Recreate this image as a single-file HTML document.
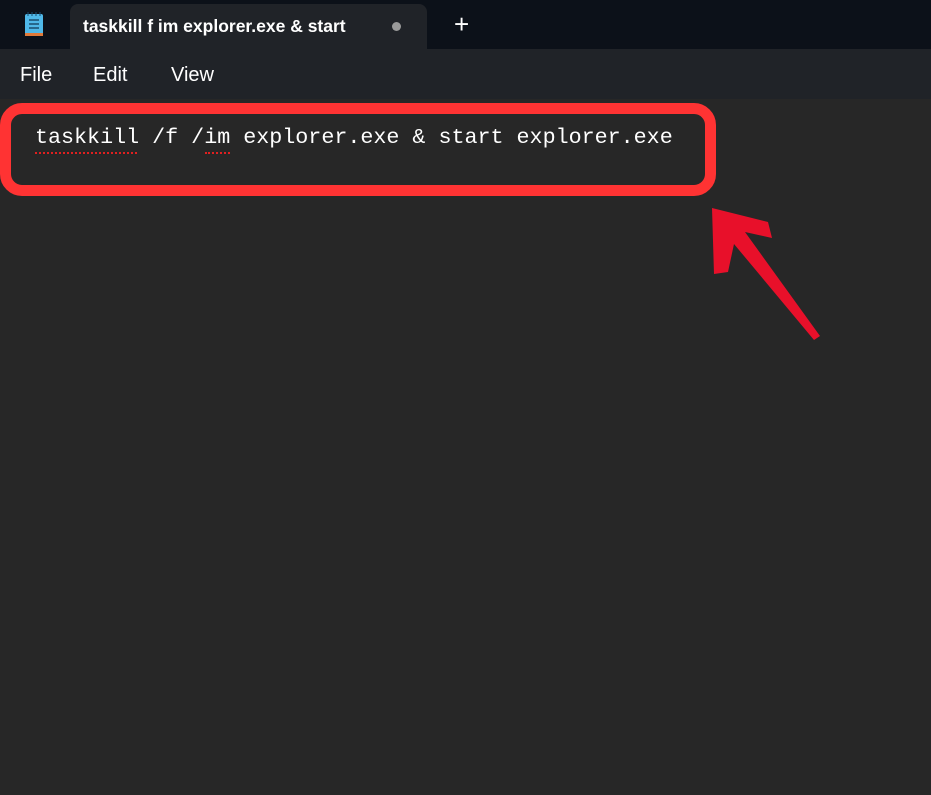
<!DOCTYPE html>
<html><head><style>
body{margin:0;width:931px;height:795px;background:#272727;overflow:hidden;position:relative;font-family:"Liberation Sans",sans-serif}
.top{position:absolute;left:0;top:0;width:931px;height:49px;background:#0c1119}
.tab{position:absolute;left:70px;top:4px;width:357px;height:45px;background:#202328;border-radius:8px 8px 0 0;color:#fff;font-weight:bold;font-size:17.5px;line-height:44px;padding-left:13px;box-sizing:border-box}
.dot{position:absolute;left:322px;top:18px;width:9px;height:9px;border-radius:50%;background:#9a9a9a}
.plus{position:absolute;left:454px;top:9px;color:#fff;font-size:26px;font-weight:300}
.menu{position:absolute;left:0;top:49px;width:931px;height:50px;background:#202328;color:#fff;font-size:20px}
.menu span{position:absolute;top:15px}
.box{position:absolute;left:0;top:103px;width:716px;height:93px;border:11px solid #ff3333;border-radius:22px;box-sizing:border-box}
.txt{position:absolute;left:35px;top:125px;color:#fff;font-family:"Liberation Mono",monospace;font-size:21.7px;white-space:pre}
.sq{position:absolute;height:3px;top:149px;border-bottom:2px dotted #e02020}
</style></head><body>
<div class="top">
<svg style="position:absolute;left:24px;top:12px" width="20" height="26" viewBox="0 0 20 26"><rect x="1" y="2" width="18" height="22" rx="2" fill="#4fb8e8"/><rect x="1" y="21" width="18" height="3" fill="#e07a3a"/><g stroke="#1a4d6e" stroke-width="1.5"><line x1="5" y1="8" x2="15" y2="8"/><line x1="5" y1="12" x2="15" y2="12"/><line x1="5" y1="16" x2="15" y2="16"/></g><g stroke="#1a4d6e" stroke-width="1"><line x1="4" y1="0" x2="4" y2="4"/><line x1="8" y1="0" x2="8" y2="4"/><line x1="12" y1="0" x2="12" y2="4"/><line x1="16" y1="0" x2="16" y2="4"/></g></svg>
<div class="tab">taskkill f im explorer.exe &amp; start<div class="dot"></div></div>
<div class="plus">+</div>
</div>
<div class="menu"><span style="left:20px">File</span><span style="left:93px">Edit</span><span style="left:171px">View</span></div>
<div class="box"></div>
<div class="txt">taskkill /f /im explorer.exe &amp; start explorer.exe</div>
<div class="sq" style="left:35px;width:102px"></div>
<div class="sq" style="left:205px;width:25px"></div>
<svg style="position:absolute;left:0;top:0" width="931" height="795">
<path d="M712 208 L768 222 L772 238 L745 232 L820 336 L814 340 L734 244 L728 272 L714 274 Z" fill="#e8102a"/>
</svg>
</body></html>
